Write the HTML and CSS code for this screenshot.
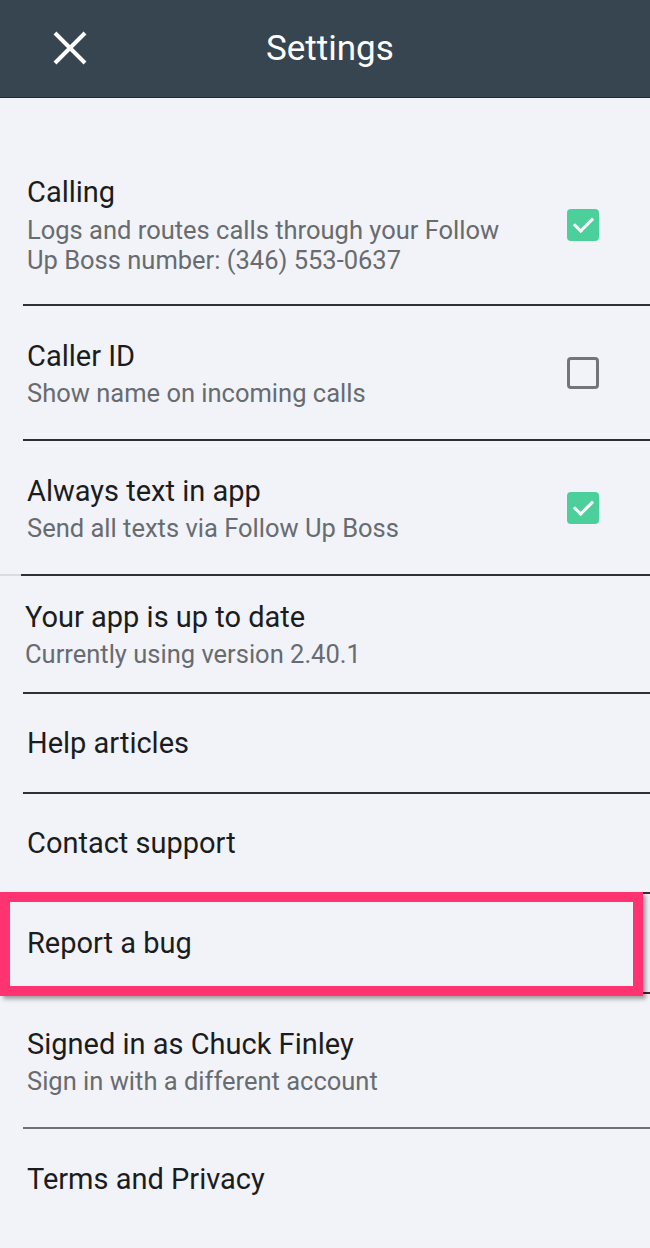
FILE: index.html
```html
<!DOCTYPE html>
<html>
<head>
    <title>Settings</title>
    <link rel="stylesheet" href="styles.css">
</head>
<body>
    <div class="topbar">
        <button class="close-btn" aria-label="Close">
            <svg width="36" height="34" viewBox="0 0 36 34">
                <path d="M3 2 L33 32 M33 2 L3 32" stroke="#fff" stroke-width="4" fill="none"/>
            </svg>
        </button>
        <h1 class="topbar-title">Settings</h1>
    </div>

    <div class="settings-list">
        <div class="row row-first">
            <div class="row-text">
                <div class="row-title">Calling</div>
                <div class="row-sub">Logs and routes calls through your Follow<br>Up Boss number: (346) 553-0637</div>
            </div>
            <span class="check checked"></span>
        </div>
        <div class="divider"></div>

        <div class="row row-tall">
            <div class="row-text">
                <div class="row-title">Caller ID</div>
                <div class="row-sub">Show name on incoming calls</div>
            </div>
            <span class="check"></span>
        </div>
        <div class="divider"></div>

        <div class="row row-tall">
            <div class="row-text">
                <div class="row-title">Always text in app</div>
                <div class="row-sub">Send all texts via Follow Up Boss</div>
            </div>
            <span class="check checked"></span>
        </div>
        <div class="divider divider-full"></div>

        <div class="row row-mid row-shift">
            <div class="row-text">
                <div class="row-title">Your app is up to date</div>
                <div class="row-sub">Currently using version 2.40.1</div>
            </div>
        </div>
        <div class="divider"></div>

        <div class="row">
            <div class="row-title">Help articles</div>
        </div>
        <div class="divider"></div>

        <div class="row">
            <div class="row-title">Contact support</div>
        </div>
        <div class="divider"></div>

        <div class="row row-marked">
            <div class="row-title">Report a bug</div>
            <div class="mark"></div>
        </div>
        <div class="divider"></div>

        <div class="row row-tall">
            <div class="row-text">
                <div class="row-title">Signed in as Chuck Finley</div>
                <div class="row-sub">Sign in with a different account</div>
            </div>
        </div>
        <div class="divider divider-light"></div>

        <div class="row row-last">
            <div class="row-title">Terms and Privacy</div>
        </div>
    </div>
</body>
</html>
```

FILE: styles.css
```css
body {
    margin: 0;
    background: #f1f3f8;
    font-family: Roboto, "Liberation Sans", sans-serif;
    color: #1b1c1e;
}
.topbar {
    height: 97px;
    background: #36454f;
    border-bottom: 1px solid #1f2a31;
    display: flex;
    align-items: center;
}
.close-btn {
    background: none;
    border: none;
    padding: 0;
    margin-left: 52px;
    margin-top: -2px;
    width: 36px;
    height: 34px;
    cursor: pointer;
}
.topbar-title {
    margin: 0 0 0 178px;
    font-size: 35px;
    font-weight: 400;
    color: #fff;
}
.settings-list {
    padding-top: 47px;
}
.row {
    display: flex;
    align-items: center;
    justify-content: space-between;
    height: 98px;
    padding: 0 51px 0 27px;
    position: relative;
}
.row-first {
    height: 159px;
}
.row-tall {
    height: 133px;
}
.row-mid {
    height: 116px;
}
.row-last {
    height: 100px;
}
.row-shift {
    padding-left: 25px;
}
.row-title {
    font-size: 29px;
    line-height: 36px;
}
.row-sub {
    font-size: 25.5px;
    line-height: 30px;
    color: #686b6f;
    margin-top: 4px;
}
.row-first .row-sub {
    margin-top: 5px;
}
.check {
    width: 26px;
    height: 26px;
    border: 3px solid #747578;
    border-radius: 4px;
    flex-shrink: 0;
}
.check.checked {
    width: 32px;
    height: 32px;
    border: none;
    background: #4bcf9b;
    position: relative;
}
.check.checked::after {
    content: "";
    position: absolute;
    left: 11px;
    top: 4px;
    width: 8px;
    height: 16px;
    border: solid #fff;
    border-width: 0 3px 3px 0;
    transform: rotate(45deg);
}
.divider {
    height: 2px;
    margin-left: 23px;
    background: #2e3134;
}
.divider-full {
    margin-left: 0;
    background: linear-gradient(to right, #d9dbe0 0, #d9dbe0 21px, #2e3134 21px);
}
.divider-light {
    background: #6d7074;
}
/* highlight frame around the bug report row */
.mark {
    position: absolute;
    left: 0;
    top: -2px;
    width: 623px;
    height: 84px;
    border: 10px solid #ff3370;
    box-shadow: 3px 3px 4px rgba(0, 0, 0, 0.35);
    z-index: 1;
}
```
